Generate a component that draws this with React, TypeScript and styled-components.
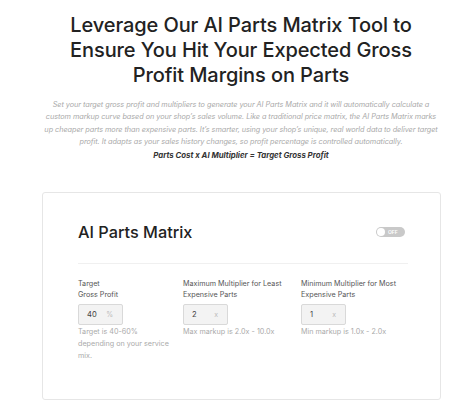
import React from 'react';
import styled, { createGlobalStyle } from 'styled-components';

const GlobalStyle = createGlobalStyle`
  html, body {
    margin: 0;
    padding: 0;
    background: #ffffff;
  }
  body {
    font-family: 'Inter', 'Noto Sans', sans-serif;
    color: #222;
  }
`;

const Page = styled.div`
  width: 474px;
  padding: 13px 0 0 8px;
  box-sizing: border-box;
`;

const Hero = styled.section`
  display: flex;
  flex-direction: column;
  align-items: center;
  text-align: center;
`;

const Heading = styled.h1`
  margin: 0;
  width: 360px;
  font-size: 20px;
  line-height: 25px;
  font-weight: 500;
  letter-spacing: -0.1px;
  color: #222;
`;

const Intro = styled.p`
  margin: 11px 0 0;
  width: 401px;
  font-size: 7.3px;
  line-height: 12.3px;
  font-style: italic;
  letter-spacing: -0.05px;
  color: #a9a9a9;
`;

const Formula = styled.p`
  margin: 2px 0 0;
  font-size: 7.8px;
  font-weight: 700;
  font-style: italic;
  color: #333;
`;

const Card = styled.div`
  margin: 32px 33px 0 34px;
  border: 1px solid #e6e6e6;
  border-radius: 3px;
  padding: 29px 32px 37px 35px;
`;

const CardHeader = styled.div`
  display: flex;
  align-items: center;
  justify-content: space-between;
  padding-bottom: 21px;
  border-bottom: 1px solid #f0f0f0;
`;

const CardTitle = styled.h2`
  margin: 0;
  font-size: 16.3px;
  font-weight: 500;
  color: #222;
`;

const Toggle = styled.div`
  display: flex;
  align-items: center;
  gap: 3px;
  width: 29px;
  height: 10px;
  padding: 1px;
  box-sizing: border-box;
  border-radius: 5px;
  background: #c9c9c9;
  margin-right: 3px;
`;

const Knob = styled.span`
  width: 8px;
  height: 8px;
  border-radius: 50%;
  background: #fff;
`;

const ToggleText = styled.span`
  font-size: 5px;
  font-weight: 600;
  color: #fff;
`;

const Fields = styled.div`
  display: grid;
  grid-template-columns: 95px 108px 1fr;
  column-gap: 10px;
  padding-top: 14px;
`;

const Field = styled.div`
  display: flex;
  flex-direction: column;
`;

const Label = styled.label`
  font-size: 7.2px;
  line-height: 11px;
  color: #555;
  min-height: 22px;
`;

const InputBox = styled.div`
  display: flex;
  align-items: center;
  justify-content: space-between;
  width: 45px;
  height: 21px;
  margin-top: 4px;
  padding: 0 9px 0 8px;
  box-sizing: border-box;
  border: 1px solid #d9d9d9;
  border-radius: 2px;
  background: #f3f3f3;
  font-size: 7.6px;
  color: #444;
`;

const Unit = styled.span`
  color: #bbb;
  font-size: 7px;
`;

const Help = styled.div`
  margin-top: 1px;
  font-size: 7.2px;
  line-height: 12px;
  color: #aaa;
`;

interface FieldData {
  label: React.ReactNode;
  value: string;
  unit: string;
  help: string;
}

const fields: FieldData[] = [
  {
    label: (
      <>
        Target
        <br />
        Gross Profit
      </>
    ),
    value: '40',
    unit: '%',
    help: 'Target is 40-60% depending on your service mix.',
  },
  {
    label: 'Maximum Multiplier for Least Expensive Parts',
    value: '2',
    unit: 'x',
    help: 'Max markup is 2.0x - 10.0x',
  },
  {
    label: 'Minimum Multiplier for Most Expensive Parts',
    value: '1',
    unit: 'x',
    help: 'Min markup is 1.0x - 2.0x',
  },
];

export default function App() {
  return (
    <Page>
      <GlobalStyle />
      <Hero>
        <Heading>
          Leverage Our AI Parts Matrix Tool to Ensure You Hit Your Expected Gross Profit Margins on Parts
        </Heading>
        <Intro>
          Set your target gross profit and multipliers to generate your AI Parts Matrix and it will automatically
          calculate a custom markup curve based on your shop’s sales volume. Like a traditional price matrix, the AI
          Parts Matrix marks up cheaper parts more than expensive parts. It’s smarter, using your shop’s unique, real
          world data to deliver target profit. It adapts as your sales history changes, so profit percentage is
          controlled automatically.
        </Intro>
        <Formula>Parts Cost x AI Multiplier = Target Gross Profit</Formula>
      </Hero>
      <Card>
        <CardHeader>
          <CardTitle>AI Parts Matrix</CardTitle>
          <Toggle>
            <Knob />
            <ToggleText>OFF</ToggleText>
          </Toggle>
        </CardHeader>
        <Fields>
          {fields.map((f, i) => (
            <Field key={i}>
              <Label>{f.label}</Label>
              <InputBox>
                <span>{f.value}</span>
                <Unit>{f.unit}</Unit>
              </InputBox>
              <Help>{f.help}</Help>
            </Field>
          ))}
        </Fields>
      </Card>
    </Page>
  );
}
